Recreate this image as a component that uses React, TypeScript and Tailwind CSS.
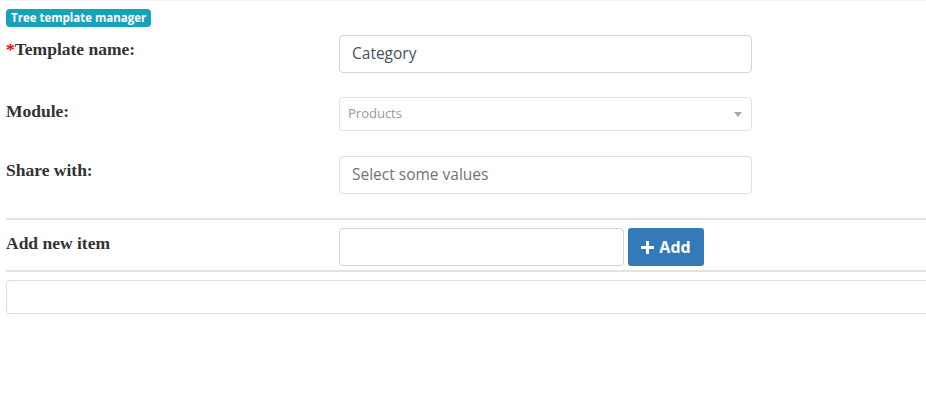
import React from "react";

const labelCls =
  "font-['Liberation_Serif',serif] font-bold text-[17.5px] leading-[19px] text-[#333]";

export default function App() {
  return (
    <div className="w-[926px] h-[395px] overflow-hidden bg-white border-t border-[#f3f3f3]">
      <div className="px-[6px] pt-[8px]">
        <div className="flex">
          <div className="flex items-center h-[18px] px-[5px] rounded-[4px] bg-[#17a2b8] text-white font-['Open_Sans',sans-serif] font-bold text-[11.5px] leading-none">
            Tree template manager
          </div>
        </div>

        <div className="flex mt-[8px]">
          <div className={`${labelCls} w-[333px] pt-[5px]`}>
            <span className="text-[#e00]">*</span>Template name:
          </div>
          <div className="w-[413px] h-[38px] border border-[#ced4da] rounded-[4px] flex items-center pl-[12px] font-['Open_Sans',sans-serif] text-[15.5px] text-[#495057]">
            Category
          </div>
        </div>

        <div className="flex mt-[24px]">
          <div className={`${labelCls} w-[333px] pt-[5px]`}>Module:</div>
          <div className="w-[413px] h-[34px] border border-[#e2e2e2] rounded-[4px] flex items-center justify-between pl-[8px] pr-[9px] font-['Open_Sans',sans-serif] text-[13px] text-[#999]">
            <span>Products</span>
            <svg width="8" height="5" viewBox="0 0 8 5">
              <path d="M0 0 L8 0 L4 5 Z" fill="#aaa" />
            </svg>
          </div>
        </div>

        <div className="flex mt-[25px]">
          <div className={`${labelCls} w-[333px] pt-[5px]`}>Share with:</div>
          <div className="w-[413px] h-[38px] border border-[#dcdfe3] rounded-[4px] flex items-center pl-[12px] font-['Open_Sans',sans-serif] text-[15.5px] text-[#6c757d]">
            Select some values
          </div>
        </div>

        <div className="h-[2px] bg-[#e2e2e2] mt-[24px] w-[940px]" />

        <div className="flex mt-[8px]">
          <div className={`${labelCls} w-[333px] pt-[6px]`}>Add new item</div>
          <div className="w-[285px] h-[38px] border border-[#ced4da] rounded-[4px]" />
          <button className="ml-[4px] w-[76px] h-[38px] rounded-[3px] bg-[#337ab7] text-white flex items-center justify-center gap-[5px] font-['Open_Sans',sans-serif] font-bold text-[16px]">
            <svg width="13" height="13" viewBox="0 0 13 13">
              <path d="M5 0 H8 V5 H13 V8 H8 V13 H5 V8 H0 V5 H5 Z" fill="#fff" />
            </svg>
            <span>Add</span>
          </button>
        </div>

        <div className="h-[2px] bg-[#e2e2e2] mt-[4px] w-[940px]" />

        <div className="mt-[8px] w-[940px] h-[34px] border border-[#dddddd] rounded-[4px]" />
      </div>
    </div>
  );
}
